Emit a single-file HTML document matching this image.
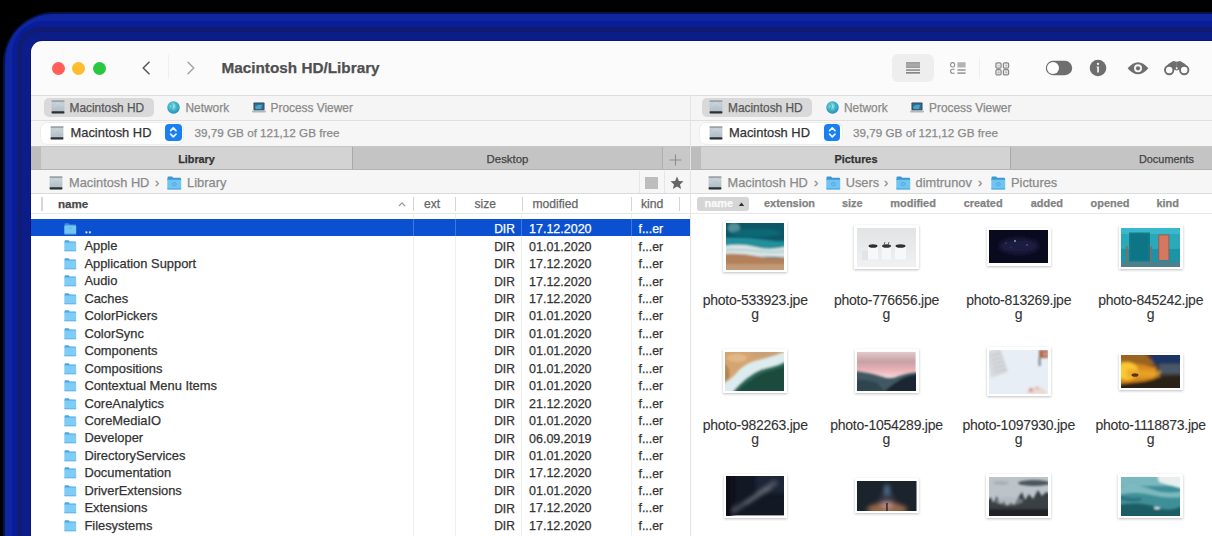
<!DOCTYPE html>
<html><head><meta charset="utf-8"><style>
*{margin:0;padding:0;box-sizing:border-box}
html,body{width:1212px;height:536px;overflow:hidden;background:#000;font-family:"Liberation Sans",sans-serif;position:relative}
.a{position:absolute}
.t{position:absolute;white-space:nowrap;line-height:20px;-webkit-text-stroke:0.25px currentColor}
svg.a{overflow:visible}
</style></head><body>
<div class="a" style="left:2.5px;top:11.5px;width:1400px;height:800px;background:rgba(14,39,160,0.45);border-radius:51px"></div>
<div class="a" style="left:5px;top:14px;width:1400px;height:800px;background:#0e27a0;border-radius:48px"></div>
<div class="a" style="left:12px;top:21px;width:1400px;height:800px;background:#0a1c98;border-radius:32px"></div>
<div class="a" style="left:17px;top:27px;width:1400px;height:800px;background:#0f1c72;border-radius:23px"></div>
<div class="a" style="left:22px;top:32px;width:1400px;height:800px;background:#0c1d8a;border-radius:17px"></div>
<div class="a" style="left:30px;top:40px;width:1400px;height:800px;background:#0a1678;border-radius:12px"></div>
<div class="a" style="left:31px;top:41px;width:1400px;height:800px;background:#fbfbfb;border-radius:11px"></div>
<div class="a" style="left:51.8px;top:61.5px;width:13px;height:13px;border-radius:50%;background:#fe5f57"></div>
<div class="a" style="left:72.3px;top:61.5px;width:13px;height:13px;border-radius:50%;background:#febc2e"></div>
<div class="a" style="left:92.9px;top:61.5px;width:13px;height:13px;border-radius:50%;background:#28c840"></div>
<svg class="a" style="left:141px;top:61px" width="10" height="14" viewBox="0 0 10 14"><path d="M8 1.2 L2.2 7 L8 12.8" stroke="#5a5a5a" stroke-width="1.6" fill="none" stroke-linecap="round" stroke-linejoin="round"/></svg>
<div class="a" style="left:168px;top:55px;width:1px;height:24px;background:#efefef;"></div>
<svg class="a" style="left:186px;top:61px" width="10" height="14" viewBox="0 0 10 14"><path d="M2 1.2 L7.8 7 L2 12.8" stroke="#a6a6a6" stroke-width="1.5" fill="none" stroke-linecap="round" stroke-linejoin="round"/></svg>
<div class="t" style="left:221.5px;top:58.10px;font-size:15.3px;color:#505050;font-weight:700;">Macintosh HD/Library</div>
<div class="a" style="left:892px;top:54px;width:42px;height:28px;background:#eeeeee;border-radius:6px"></div>
<svg class="a" style="left:906px;top:62px" width="14" height="12" viewBox="0 0 14 12"><rect x="0" y="0.2" width="14" height="5.7" fill="#a9a9a9"/><rect x="0" y="0.2" width="14" height="1.2" fill="#9a9a9a"/><rect x="0" y="4.7" width="14" height="1.2" fill="#9a9a9a"/><rect x="0" y="7.3" width="14" height="1.5" fill="#858585"/><rect x="0" y="10.1" width="14" height="1.5" fill="#7a7a7a"/></svg>
<svg class="a" style="left:949.5px;top:62px" width="16" height="12" viewBox="0 0 16 12"><rect x="0.6" y="0.6" width="4" height="4.4" rx="1.8" fill="none" stroke="#8a8a8a" stroke-width="1.1"/><path d="M4.6 7.3 H2.6 Q0.6 7.3 0.6 9.3 Q0.6 11.3 2.6 11.3 H4.6" fill="none" stroke="#8a8a8a" stroke-width="1.1"/><rect x="7.4" y="0.2" width="8.2" height="5.3" fill="#b3b3b3"/><rect x="7.4" y="7.3" width="8.2" height="1.4" fill="#8c8c8c"/><rect x="7.4" y="10.4" width="8.2" height="1.4" fill="#8c8c8c"/></svg>
<div class="a" style="left:979px;top:57px;width:1px;height:22px;background:#efefef;"></div>
<svg class="a" style="left:994.5px;top:61.5px" width="15" height="14" viewBox="0 0 15 14"><g fill="#eaeaea" stroke="#888" stroke-width="1.2"><rect x="0.9" y="0.9" width="5.2" height="5.2" rx="1.2"/><rect x="8.4" y="0.9" width="5.2" height="5.2" rx="1.2"/><rect x="0.9" y="7.7" width="5.2" height="5.2" rx="1.2"/><rect x="8.4" y="7.7" width="5.2" height="5.2" rx="1.2"/></g><path d="M2.2 3.6 H5 M11.2 2.2 V5 M9.8 3.6 H12.6 M2.2 10.4 H5 M3.6 9 V11.8 M9.8 10.4 H12.6 M11.2 9 V11.8" stroke="#bdbdbd" stroke-width="0.8"/></svg>
<svg class="a" style="left:1045px;top:60px" width="28" height="16" viewBox="0 0 28 16"><rect x="0.8" y="0.8" width="26.4" height="14.4" rx="7.2" fill="#6e6e6e"/><circle cx="8" cy="8" r="6" fill="#fff"/></svg>
<svg class="a" style="left:1089px;top:59px" width="18" height="18" viewBox="0 0 18 18"><circle cx="9" cy="9" r="8.3" fill="#6e6e6e"/><circle cx="9" cy="4.9" r="1.15" fill="#f4f4f4"/><path d="M7.6 7.4 H9.9 V13.6 H8.2 V8.5 H7.6Z" fill="#f4f4f4"/></svg>
<svg class="a" style="left:1127px;top:61px" width="22" height="15" viewBox="0 0 22 15"><path d="M0.6 7.3 Q11 -4.8 21.4 7.3 Q11 19.4 0.6 7.3Z" fill="#6e6e6e"/><circle cx="11" cy="7.3" r="4" fill="#f6f6f6"/><circle cx="11" cy="7.3" r="2.1" fill="#6e6e6e"/></svg>
<svg class="a" style="left:1160px;top:55px" width="35" height="25" viewBox="0 0 35 25"><circle cx="9.2" cy="15" r="4.2" fill="none" stroke="#6e6e6e" stroke-width="1.9"/><circle cx="24.2" cy="15" r="4.2" fill="none" stroke="#6e6e6e" stroke-width="1.9"/><path d="M5.3 12.8 Q8 8.2 13.2 6 L16.8 6.8 V15.5 L13.6 14.5 Q12.5 11.2 9.2 10.9 Q6.8 10.9 5.3 12.8Z" fill="#6e6e6e"/><path d="M28.1 12.8 Q25.4 8.2 20.2 6 L16.6 6.8 V15.5 L19.8 14.5 Q20.9 11.2 24.2 10.9 Q26.6 10.9 28.1 12.8Z" fill="#6e6e6e"/><circle cx="16.7" cy="13.2" r="1" fill="#fafafa"/></svg>
<div class="a" style="left:31px;top:95px;width:1200px;height:1px;background:#dedede;"></div>
<div class="a" style="left:31px;top:96px;width:1200px;height:24px;background:#f5f5f5;"></div>
<div class="a" style="left:31px;top:120px;width:1200px;height:1px;background:#e0e0e0;"></div>
<div class="a" style="left:31px;top:121px;width:1200px;height:25px;background:#f6f6f6;"></div>
<div class="a" style="left:31px;top:146px;width:1200px;height:24px;background:#c6c6c6;"></div>
<div class="a" style="left:31px;top:146.5px;width:1200px;height:1.2px;background:#b9b9b9;"></div>
<div class="a" style="left:31px;top:169px;width:1200px;height:1px;background:#b4b4b4;"></div>
<div class="a" style="left:31px;top:170px;width:1200px;height:23px;background:#f6f6f6;"></div>
<div class="a" style="left:31px;top:193px;width:1200px;height:1px;background:#dadada;"></div>
<div class="a" style="left:31px;top:194px;width:1200px;height:342px;background:#ffffff;"></div>
<div class="a" style="left:31px;top:213px;width:1200px;height:1px;background:#e8e8e8;"></div>
<div class="a" style="left:43.5px;top:98px;width:110px;height:19px;background:#d9d9d9;border-radius:5px"></div>
<svg class="a" style="left:50.5px;top:99.8px" width="14" height="14" viewBox="0 0 14 14"><defs><linearGradient id="dg" x1="0" y1="0" x2="0" y2="1"><stop offset="0" stop-color="#c9d3d9"/><stop offset="1" stop-color="#aebbc3"/></linearGradient></defs>
<rect x="0.6" y="0.5" width="12.8" height="12.8" rx="1" fill="url(#dg)"/><rect x="0.6" y="0.5" width="12.8" height="1.1" fill="#80868c"/><path d="M2 7 L7 3 L12 6" stroke="#d8e0e4" stroke-width="0.8" fill="none" opacity="0.6"/><rect x="0.6" y="11.3" width="12.8" height="2.1" rx="0.7" fill="#2c3034"/></svg>
<div class="t" style="left:69.5px;top:97.88px;font-size:11.9px;color:#575757;font-weight:400;">Macintosh HD</div>
<svg class="a" style="left:167px;top:100.5px" width="13" height="13" viewBox="0 0 13 13"><defs><radialGradient id="gg" cx="0.45" cy="0.4" r="0.65"><stop offset="0" stop-color="#a8eef6"/><stop offset="0.55" stop-color="#3fb0d4"/><stop offset="1" stop-color="#2283b8"/></radialGradient></defs>
<circle cx="6.5" cy="6.5" r="6.2" fill="url(#gg)"/><path d="M3.5 3 Q6 4 5 6.5 Q3.5 8 4.8 10 Q6 11 5.8 12.3" stroke="#34b08c" stroke-width="1.3" fill="none" opacity="0.75"/><path d="M8.2 2 Q10 4 9.2 6.2 Q8.4 8 10.2 9" stroke="#38b48e" stroke-width="1.1" fill="none" opacity="0.75"/></svg>
<div class="t" style="left:185.5px;top:97.88px;font-size:11.9px;color:#8a8a8a;font-weight:400;">Network</div>
<svg class="a" style="left:251.5px;top:102px" width="14" height="11" viewBox="0 0 14 11"><rect x="1.5" y="0.5" width="11" height="8" rx="0.8" fill="#34404c"/><rect x="2.4" y="1.4" width="9.2" height="6.3" fill="#2f6e98"/><path d="M3 5 Q6 2 10 3 L9 7 H4Z" fill="#4fb0d8" opacity="0.8"/><rect x="0" y="8.5" width="14" height="1.9" rx="0.8" fill="#b4b8bc"/></svg>
<div class="t" style="left:270.5px;top:97.88px;font-size:11.9px;color:#8a8a8a;font-weight:400;">Process Viewer</div>
<div class="a" style="left:41px;top:123px;width:142px;height:21px;background:#ffffff;border-radius:6px;box-shadow:0 0 0 0.5px #e4e4e4"></div>
<svg class="a" style="left:50px;top:126px" width="14" height="14" viewBox="0 0 14 14"><defs><linearGradient id="dg" x1="0" y1="0" x2="0" y2="1"><stop offset="0" stop-color="#c9d3d9"/><stop offset="1" stop-color="#aebbc3"/></linearGradient></defs>
<rect x="0.6" y="0.5" width="12.8" height="12.8" rx="1" fill="url(#dg)"/><rect x="0.6" y="0.5" width="12.8" height="1.1" fill="#80868c"/><path d="M2 7 L7 3 L12 6" stroke="#d8e0e4" stroke-width="0.8" fill="none" opacity="0.6"/><rect x="0.6" y="11.3" width="12.8" height="2.1" rx="0.7" fill="#2c3034"/></svg>
<div class="t" style="left:70.5px;top:123.13px;font-size:12.9px;color:#333;font-weight:400;">Macintosh HD</div>
<div class="a" style="left:165px;top:124.3px;width:16.6px;height:16.6px;background:#1a80f2;border-radius:4px"></div>
<svg class="a" style="left:165px;top:124.3px" width="17" height="17" viewBox="0 0 17 17"><path d="M5.6 6.6 L8.3 3.9 L11 6.6" stroke="#eaf4ff" stroke-width="1.7" fill="none" stroke-linecap="round" stroke-linejoin="round"/><path d="M5.6 10.2 L8.3 12.9 L11 10.2" stroke="#eaf4ff" stroke-width="1.7" fill="none" stroke-linecap="round" stroke-linejoin="round"/></svg>
<div class="t" style="left:194.5px;top:123.45px;font-size:11.7px;color:#8a8a8a;font-weight:400;">39,79 GB of 121,12 GB free</div>
<div class="a" style="left:31px;top:147px;width:10px;height:22px;background:#bdbdbd;"></div>
<div class="a" style="left:41px;top:147px;width:311px;height:22px;background:#d3d3d3;"></div>
<div class="a" style="left:352px;top:147px;width:1px;height:22px;background:#a9a9a9;"></div>
<div class="a" style="left:353px;top:147px;width:309px;height:22px;background:#c4c4c4;"></div>
<div class="a" style="left:662px;top:147px;width:1px;height:22px;background:#b0b0b0;"></div>
<div class="a" style="left:663px;top:147px;width:26px;height:22px;background:#c8c8c8;"></div>
<div class="t" style="left:146.5px;width:100px;text-align:center;top:148.96px;font-size:10.8px;color:#333;font-weight:700;">Library</div>
<div class="t" style="left:457.5px;width:100px;text-align:center;top:148.75px;font-size:11.4px;color:#444;font-weight:400;">Desktop</div>
<svg class="a" style="left:669px;top:154px" width="13" height="12" viewBox="0 0 13 12"><path d="M6.5 0.5 V11.5 M0.5 6 H12.5" stroke="#8c8c8c" stroke-width="1.1"/></svg>
<svg class="a" style="left:49px;top:176px" width="14" height="14" viewBox="0 0 14 14"><defs><linearGradient id="dg" x1="0" y1="0" x2="0" y2="1"><stop offset="0" stop-color="#c9d3d9"/><stop offset="1" stop-color="#aebbc3"/></linearGradient></defs>
<rect x="0.6" y="0.5" width="12.8" height="12.8" rx="1" fill="url(#dg)"/><rect x="0.6" y="0.5" width="12.8" height="1.1" fill="#80868c"/><path d="M2 7 L7 3 L12 6" stroke="#d8e0e4" stroke-width="0.8" fill="none" opacity="0.6"/><rect x="0.6" y="11.3" width="12.8" height="2.1" rx="0.7" fill="#2c3034"/></svg>
<div class="t" style="left:69px;top:172.76px;font-size:12.8px;color:#8a8a8a;font-weight:400;">Macintosh HD</div>
<div class="t" style="left:155px;top:172.76px;font-size:12.8px;color:#8a8a8a;font-weight:400;">&#8250;</div>
<svg class="a" style="left:167px;top:176.3px" width="15" height="14" viewBox="0 0 15 14"><path d="M0.5 1.4 Q0.5 0.4 1.5 0.4 H5 L6.3 1.8 H13.2 Q14 1.8 14 2.6 V3.6 H0.5Z" fill="#3f94d2"/>
<rect x="0.3" y="3" width="13.9" height="10.4" rx="0.9" fill="#6fc4f2"/><rect x="0.3" y="3" width="13.9" height="1" fill="#4aa2dc"/><rect x="0.3" y="12.5" width="13.9" height="0.9" fill="#4d9fd4"/><rect x="5.6" y="6.6" width="3.4" height="2.8" rx="0.5" fill="none" stroke="#4a9ed8" stroke-width="0.7"/></svg>
<div class="t" style="left:187px;top:172.73px;font-size:12.9px;color:#8a8a8a;font-weight:400;">Library</div>
<div class="a" style="left:639px;top:171px;width:1px;height:22px;background:#e6e6e6;"></div>
<div class="a" style="left:645px;top:176.5px;width:12.5px;height:12px;background:#bdbdbd;"></div>
<div class="a" style="left:664px;top:171px;width:1px;height:22px;background:#e6e6e6;"></div>
<svg class="a" style="left:669.5px;top:175.5px" width="14" height="14" viewBox="0 0 14 14"><path d="M7 0.6 L8.9 4.9 L13.5 5.3 L10 8.4 L11.1 13 L7 10.6 L2.9 13 L4 8.4 L0.5 5.3 L5.1 4.9Z" fill="#666"/></svg>
<div class="a" style="left:41px;top:197px;width:2px;height:14px;background:#d6d6d6;"></div>
<div class="t" style="left:58px;top:193.98px;font-size:11.6px;color:#4a4a4a;font-weight:700;">name</div>
<svg class="a" style="left:398px;top:201px" width="8" height="6" viewBox="0 0 8 6"><path d="M1 5 L4 1.8 L7 5" stroke="#999" stroke-width="1.2" fill="none"/></svg>
<div class="a" style="left:413px;top:197px;width:1.2px;height:14px;background:#d4d4d4;"></div>
<div class="a" style="left:454.7px;top:197px;width:1.2px;height:14px;background:#d4d4d4;"></div>
<div class="a" style="left:521.7px;top:197px;width:1.2px;height:14px;background:#d4d4d4;"></div>
<div class="a" style="left:631px;top:197px;width:1.2px;height:14px;background:#d4d4d4;"></div>
<div class="a" style="left:678.5px;top:197px;width:1.2px;height:14px;background:#d4d4d4;"></div>
<div class="t" style="left:424px;top:193.84px;font-size:12px;color:#666;font-weight:400;">ext</div>
<div class="t" style="left:474.5px;top:193.84px;font-size:12px;color:#666;font-weight:400;">size</div>
<div class="t" style="left:532.5px;top:193.81px;font-size:12.1px;color:#666;font-weight:400;">modified</div>
<div class="t" style="left:641px;top:193.77px;font-size:12.2px;color:#666;font-weight:400;">kind</div>
<div class="a" style="left:412.5px;top:214px;width:1px;height:322px;background:#efefef;"></div>
<div class="a" style="left:454.5px;top:214px;width:1px;height:322px;background:#efefef;"></div>
<div class="a" style="left:520.5px;top:214px;width:1px;height:322px;background:#efefef;"></div>
<div class="a" style="left:631.2px;top:214px;width:1px;height:322px;background:#efefef;"></div>
<div class="a" style="left:689.5px;top:95px;width:1px;height:441px;background:#e4e4e4;"></div>
<div class="a" style="left:31px;top:219.0px;width:658.5px;height:17.3px;background:#0a50d0;"></div>
<div class="a" style="left:412.5px;top:219.0px;width:1px;height:17.3px;background:#3f78de;"></div>
<div class="a" style="left:454.5px;top:219.0px;width:1px;height:17.3px;background:#3f78de;"></div>
<div class="a" style="left:520.5px;top:219.0px;width:1px;height:17.3px;background:#3f78de;"></div>
<div class="a" style="left:631.2px;top:219.0px;width:1px;height:17.3px;background:#3f78de;"></div>
<svg class="a" style="left:64px;top:223.0px" width="13" height="12" viewBox="0 0 13 12"><path d="M0.5 1.2 Q0.5 0.3 1.4 0.3 H4.6 L5.8 1.6 H11.2 Q12 1.6 12 2.4 V3 H0.5Z" fill="#3f8edc"/>
<rect x="0.3" y="2.6" width="11.9" height="8.6" rx="0.9" fill="#74c6f2"/><rect x="0.3" y="10.4" width="11.9" height="0.9" fill="#5aa6e6"/><rect x="4.5" y="4.6" width="3.5" height="1" fill="#4d9ede" opacity="0.6"/></svg>
<div class="t" style="left:84.4px;top:219.03px;font-size:12.9px;color:#fff;font-weight:400;">..</div>
<div class="t" style="left:454.79999999999995px;width:60px;text-align:right;top:219.34px;font-size:12px;color:#fff;font-weight:400;">DIR</div>
<div class="t" style="left:529px;top:219.17px;font-size:12.5px;color:#fff;font-weight:400;">17.12.2020</div>
<div class="t" style="left:638.5px;top:219.24px;font-size:12.3px;color:#fff;font-weight:400;">f...er</div>
<svg class="a" style="left:64px;top:240.45px" width="13" height="12" viewBox="0 0 13 12"><path d="M0.5 1.2 Q0.5 0.3 1.4 0.3 H4.6 L5.8 1.6 H11.2 Q12 1.6 12 2.4 V3 H0.5Z" fill="#4aa6e2"/>
<rect x="0.3" y="2.6" width="11.9" height="8.6" rx="0.9" fill="#7fcdf6"/><rect x="0.3" y="10.2" width="11.9" height="1" fill="#66b6e4"/></svg>
<div class="t" style="left:84.4px;top:236.48px;font-size:12.9px;color:#333;font-weight:400;">Apple</div>
<div class="t" style="left:454.79999999999995px;width:60px;text-align:right;top:236.79px;font-size:12px;color:#333;font-weight:400;">DIR</div>
<div class="t" style="left:529px;top:236.62px;font-size:12.5px;color:#333;font-weight:400;">01.01.2020</div>
<div class="t" style="left:638.5px;top:236.69px;font-size:12.3px;color:#333;font-weight:400;">f...er</div>
<svg class="a" style="left:64px;top:257.9px" width="13" height="12" viewBox="0 0 13 12"><path d="M0.5 1.2 Q0.5 0.3 1.4 0.3 H4.6 L5.8 1.6 H11.2 Q12 1.6 12 2.4 V3 H0.5Z" fill="#4aa6e2"/>
<rect x="0.3" y="2.6" width="11.9" height="8.6" rx="0.9" fill="#7fcdf6"/><rect x="0.3" y="10.2" width="11.9" height="1" fill="#66b6e4"/></svg>
<div class="t" style="left:84.4px;top:253.93px;font-size:12.9px;color:#333;font-weight:400;">Application Support</div>
<div class="t" style="left:454.79999999999995px;width:60px;text-align:right;top:254.24px;font-size:12px;color:#333;font-weight:400;">DIR</div>
<div class="t" style="left:529px;top:254.07px;font-size:12.5px;color:#333;font-weight:400;">17.12.2020</div>
<div class="t" style="left:638.5px;top:254.14px;font-size:12.3px;color:#333;font-weight:400;">f...er</div>
<svg class="a" style="left:64px;top:275.35px" width="13" height="12" viewBox="0 0 13 12"><path d="M0.5 1.2 Q0.5 0.3 1.4 0.3 H4.6 L5.8 1.6 H11.2 Q12 1.6 12 2.4 V3 H0.5Z" fill="#4aa6e2"/>
<rect x="0.3" y="2.6" width="11.9" height="8.6" rx="0.9" fill="#7fcdf6"/><rect x="0.3" y="10.2" width="11.9" height="1" fill="#66b6e4"/></svg>
<div class="t" style="left:84.4px;top:271.38px;font-size:12.9px;color:#333;font-weight:400;">Audio</div>
<div class="t" style="left:454.79999999999995px;width:60px;text-align:right;top:271.69px;font-size:12px;color:#333;font-weight:400;">DIR</div>
<div class="t" style="left:529px;top:271.52px;font-size:12.5px;color:#333;font-weight:400;">17.12.2020</div>
<div class="t" style="left:638.5px;top:271.59px;font-size:12.3px;color:#333;font-weight:400;">f...er</div>
<svg class="a" style="left:64px;top:292.8px" width="13" height="12" viewBox="0 0 13 12"><path d="M0.5 1.2 Q0.5 0.3 1.4 0.3 H4.6 L5.8 1.6 H11.2 Q12 1.6 12 2.4 V3 H0.5Z" fill="#4aa6e2"/>
<rect x="0.3" y="2.6" width="11.9" height="8.6" rx="0.9" fill="#7fcdf6"/><rect x="0.3" y="10.2" width="11.9" height="1" fill="#66b6e4"/></svg>
<div class="t" style="left:84.4px;top:288.83px;font-size:12.9px;color:#333;font-weight:400;">Caches</div>
<div class="t" style="left:454.79999999999995px;width:60px;text-align:right;top:289.14px;font-size:12px;color:#333;font-weight:400;">DIR</div>
<div class="t" style="left:529px;top:288.97px;font-size:12.5px;color:#333;font-weight:400;">17.12.2020</div>
<div class="t" style="left:638.5px;top:289.04px;font-size:12.3px;color:#333;font-weight:400;">f...er</div>
<svg class="a" style="left:64px;top:310.25px" width="13" height="12" viewBox="0 0 13 12"><path d="M0.5 1.2 Q0.5 0.3 1.4 0.3 H4.6 L5.8 1.6 H11.2 Q12 1.6 12 2.4 V3 H0.5Z" fill="#4aa6e2"/>
<rect x="0.3" y="2.6" width="11.9" height="8.6" rx="0.9" fill="#7fcdf6"/><rect x="0.3" y="10.2" width="11.9" height="1" fill="#66b6e4"/></svg>
<div class="t" style="left:84.4px;top:306.28px;font-size:12.9px;color:#333;font-weight:400;">ColorPickers</div>
<div class="t" style="left:454.79999999999995px;width:60px;text-align:right;top:306.59px;font-size:12px;color:#333;font-weight:400;">DIR</div>
<div class="t" style="left:529px;top:306.42px;font-size:12.5px;color:#333;font-weight:400;">01.01.2020</div>
<div class="t" style="left:638.5px;top:306.49px;font-size:12.3px;color:#333;font-weight:400;">f...er</div>
<svg class="a" style="left:64px;top:327.7px" width="13" height="12" viewBox="0 0 13 12"><path d="M0.5 1.2 Q0.5 0.3 1.4 0.3 H4.6 L5.8 1.6 H11.2 Q12 1.6 12 2.4 V3 H0.5Z" fill="#4aa6e2"/>
<rect x="0.3" y="2.6" width="11.9" height="8.6" rx="0.9" fill="#7fcdf6"/><rect x="0.3" y="10.2" width="11.9" height="1" fill="#66b6e4"/></svg>
<div class="t" style="left:84.4px;top:323.73px;font-size:12.9px;color:#333;font-weight:400;">ColorSync</div>
<div class="t" style="left:454.79999999999995px;width:60px;text-align:right;top:324.04px;font-size:12px;color:#333;font-weight:400;">DIR</div>
<div class="t" style="left:529px;top:323.87px;font-size:12.5px;color:#333;font-weight:400;">01.01.2020</div>
<div class="t" style="left:638.5px;top:323.94px;font-size:12.3px;color:#333;font-weight:400;">f...er</div>
<svg class="a" style="left:64px;top:345.15px" width="13" height="12" viewBox="0 0 13 12"><path d="M0.5 1.2 Q0.5 0.3 1.4 0.3 H4.6 L5.8 1.6 H11.2 Q12 1.6 12 2.4 V3 H0.5Z" fill="#4aa6e2"/>
<rect x="0.3" y="2.6" width="11.9" height="8.6" rx="0.9" fill="#7fcdf6"/><rect x="0.3" y="10.2" width="11.9" height="1" fill="#66b6e4"/></svg>
<div class="t" style="left:84.4px;top:341.18px;font-size:12.9px;color:#333;font-weight:400;">Components</div>
<div class="t" style="left:454.79999999999995px;width:60px;text-align:right;top:341.49px;font-size:12px;color:#333;font-weight:400;">DIR</div>
<div class="t" style="left:529px;top:341.32px;font-size:12.5px;color:#333;font-weight:400;">01.01.2020</div>
<div class="t" style="left:638.5px;top:341.39px;font-size:12.3px;color:#333;font-weight:400;">f...er</div>
<svg class="a" style="left:64px;top:362.6px" width="13" height="12" viewBox="0 0 13 12"><path d="M0.5 1.2 Q0.5 0.3 1.4 0.3 H4.6 L5.8 1.6 H11.2 Q12 1.6 12 2.4 V3 H0.5Z" fill="#4aa6e2"/>
<rect x="0.3" y="2.6" width="11.9" height="8.6" rx="0.9" fill="#7fcdf6"/><rect x="0.3" y="10.2" width="11.9" height="1" fill="#66b6e4"/></svg>
<div class="t" style="left:84.4px;top:358.63px;font-size:12.9px;color:#333;font-weight:400;">Compositions</div>
<div class="t" style="left:454.79999999999995px;width:60px;text-align:right;top:358.94px;font-size:12px;color:#333;font-weight:400;">DIR</div>
<div class="t" style="left:529px;top:358.77px;font-size:12.5px;color:#333;font-weight:400;">01.01.2020</div>
<div class="t" style="left:638.5px;top:358.84px;font-size:12.3px;color:#333;font-weight:400;">f...er</div>
<svg class="a" style="left:64px;top:380.04999999999995px" width="13" height="12" viewBox="0 0 13 12"><path d="M0.5 1.2 Q0.5 0.3 1.4 0.3 H4.6 L5.8 1.6 H11.2 Q12 1.6 12 2.4 V3 H0.5Z" fill="#4aa6e2"/>
<rect x="0.3" y="2.6" width="11.9" height="8.6" rx="0.9" fill="#7fcdf6"/><rect x="0.3" y="10.2" width="11.9" height="1" fill="#66b6e4"/></svg>
<div class="t" style="left:84.4px;top:376.08px;font-size:12.9px;color:#333;font-weight:400;">Contextual Menu Items</div>
<div class="t" style="left:454.79999999999995px;width:60px;text-align:right;top:376.39px;font-size:12px;color:#333;font-weight:400;">DIR</div>
<div class="t" style="left:529px;top:376.22px;font-size:12.5px;color:#333;font-weight:400;">01.01.2020</div>
<div class="t" style="left:638.5px;top:376.29px;font-size:12.3px;color:#333;font-weight:400;">f...er</div>
<svg class="a" style="left:64px;top:397.5px" width="13" height="12" viewBox="0 0 13 12"><path d="M0.5 1.2 Q0.5 0.3 1.4 0.3 H4.6 L5.8 1.6 H11.2 Q12 1.6 12 2.4 V3 H0.5Z" fill="#4aa6e2"/>
<rect x="0.3" y="2.6" width="11.9" height="8.6" rx="0.9" fill="#7fcdf6"/><rect x="0.3" y="10.2" width="11.9" height="1" fill="#66b6e4"/></svg>
<div class="t" style="left:84.4px;top:393.53px;font-size:12.9px;color:#333;font-weight:400;">CoreAnalytics</div>
<div class="t" style="left:454.79999999999995px;width:60px;text-align:right;top:393.84px;font-size:12px;color:#333;font-weight:400;">DIR</div>
<div class="t" style="left:529px;top:393.67px;font-size:12.5px;color:#333;font-weight:400;">21.12.2020</div>
<div class="t" style="left:638.5px;top:393.74px;font-size:12.3px;color:#333;font-weight:400;">f...er</div>
<svg class="a" style="left:64px;top:414.95px" width="13" height="12" viewBox="0 0 13 12"><path d="M0.5 1.2 Q0.5 0.3 1.4 0.3 H4.6 L5.8 1.6 H11.2 Q12 1.6 12 2.4 V3 H0.5Z" fill="#4aa6e2"/>
<rect x="0.3" y="2.6" width="11.9" height="8.6" rx="0.9" fill="#7fcdf6"/><rect x="0.3" y="10.2" width="11.9" height="1" fill="#66b6e4"/></svg>
<div class="t" style="left:84.4px;top:410.98px;font-size:12.9px;color:#333;font-weight:400;">CoreMediaIO</div>
<div class="t" style="left:454.79999999999995px;width:60px;text-align:right;top:411.29px;font-size:12px;color:#333;font-weight:400;">DIR</div>
<div class="t" style="left:529px;top:411.12px;font-size:12.5px;color:#333;font-weight:400;">01.01.2020</div>
<div class="t" style="left:638.5px;top:411.19px;font-size:12.3px;color:#333;font-weight:400;">f...er</div>
<svg class="a" style="left:64px;top:432.4px" width="13" height="12" viewBox="0 0 13 12"><path d="M0.5 1.2 Q0.5 0.3 1.4 0.3 H4.6 L5.8 1.6 H11.2 Q12 1.6 12 2.4 V3 H0.5Z" fill="#4aa6e2"/>
<rect x="0.3" y="2.6" width="11.9" height="8.6" rx="0.9" fill="#7fcdf6"/><rect x="0.3" y="10.2" width="11.9" height="1" fill="#66b6e4"/></svg>
<div class="t" style="left:84.4px;top:428.43px;font-size:12.9px;color:#333;font-weight:400;">Developer</div>
<div class="t" style="left:454.79999999999995px;width:60px;text-align:right;top:428.74px;font-size:12px;color:#333;font-weight:400;">DIR</div>
<div class="t" style="left:529px;top:428.57px;font-size:12.5px;color:#333;font-weight:400;">06.09.2019</div>
<div class="t" style="left:638.5px;top:428.64px;font-size:12.3px;color:#333;font-weight:400;">f...er</div>
<svg class="a" style="left:64px;top:449.85px" width="13" height="12" viewBox="0 0 13 12"><path d="M0.5 1.2 Q0.5 0.3 1.4 0.3 H4.6 L5.8 1.6 H11.2 Q12 1.6 12 2.4 V3 H0.5Z" fill="#4aa6e2"/>
<rect x="0.3" y="2.6" width="11.9" height="8.6" rx="0.9" fill="#7fcdf6"/><rect x="0.3" y="10.2" width="11.9" height="1" fill="#66b6e4"/></svg>
<div class="t" style="left:84.4px;top:445.88px;font-size:12.9px;color:#333;font-weight:400;">DirectoryServices</div>
<div class="t" style="left:454.79999999999995px;width:60px;text-align:right;top:446.19px;font-size:12px;color:#333;font-weight:400;">DIR</div>
<div class="t" style="left:529px;top:446.02px;font-size:12.5px;color:#333;font-weight:400;">01.01.2020</div>
<div class="t" style="left:638.5px;top:446.09px;font-size:12.3px;color:#333;font-weight:400;">f...er</div>
<svg class="a" style="left:64px;top:467.29999999999995px" width="13" height="12" viewBox="0 0 13 12"><path d="M0.5 1.2 Q0.5 0.3 1.4 0.3 H4.6 L5.8 1.6 H11.2 Q12 1.6 12 2.4 V3 H0.5Z" fill="#4aa6e2"/>
<rect x="0.3" y="2.6" width="11.9" height="8.6" rx="0.9" fill="#7fcdf6"/><rect x="0.3" y="10.2" width="11.9" height="1" fill="#66b6e4"/></svg>
<div class="t" style="left:84.4px;top:463.33px;font-size:12.9px;color:#333;font-weight:400;">Documentation</div>
<div class="t" style="left:454.79999999999995px;width:60px;text-align:right;top:463.64px;font-size:12px;color:#333;font-weight:400;">DIR</div>
<div class="t" style="left:529px;top:463.47px;font-size:12.5px;color:#333;font-weight:400;">17.12.2020</div>
<div class="t" style="left:638.5px;top:463.54px;font-size:12.3px;color:#333;font-weight:400;">f...er</div>
<svg class="a" style="left:64px;top:484.75px" width="13" height="12" viewBox="0 0 13 12"><path d="M0.5 1.2 Q0.5 0.3 1.4 0.3 H4.6 L5.8 1.6 H11.2 Q12 1.6 12 2.4 V3 H0.5Z" fill="#4aa6e2"/>
<rect x="0.3" y="2.6" width="11.9" height="8.6" rx="0.9" fill="#7fcdf6"/><rect x="0.3" y="10.2" width="11.9" height="1" fill="#66b6e4"/></svg>
<div class="t" style="left:84.4px;top:480.78px;font-size:12.9px;color:#333;font-weight:400;">DriverExtensions</div>
<div class="t" style="left:454.79999999999995px;width:60px;text-align:right;top:481.09px;font-size:12px;color:#333;font-weight:400;">DIR</div>
<div class="t" style="left:529px;top:480.92px;font-size:12.5px;color:#333;font-weight:400;">01.01.2020</div>
<div class="t" style="left:638.5px;top:480.99px;font-size:12.3px;color:#333;font-weight:400;">f...er</div>
<svg class="a" style="left:64px;top:502.2px" width="13" height="12" viewBox="0 0 13 12"><path d="M0.5 1.2 Q0.5 0.3 1.4 0.3 H4.6 L5.8 1.6 H11.2 Q12 1.6 12 2.4 V3 H0.5Z" fill="#4aa6e2"/>
<rect x="0.3" y="2.6" width="11.9" height="8.6" rx="0.9" fill="#7fcdf6"/><rect x="0.3" y="10.2" width="11.9" height="1" fill="#66b6e4"/></svg>
<div class="t" style="left:84.4px;top:498.23px;font-size:12.9px;color:#333;font-weight:400;">Extensions</div>
<div class="t" style="left:454.79999999999995px;width:60px;text-align:right;top:498.54px;font-size:12px;color:#333;font-weight:400;">DIR</div>
<div class="t" style="left:529px;top:498.37px;font-size:12.5px;color:#333;font-weight:400;">17.12.2020</div>
<div class="t" style="left:638.5px;top:498.44px;font-size:12.3px;color:#333;font-weight:400;">f...er</div>
<svg class="a" style="left:64px;top:519.65px" width="13" height="12" viewBox="0 0 13 12"><path d="M0.5 1.2 Q0.5 0.3 1.4 0.3 H4.6 L5.8 1.6 H11.2 Q12 1.6 12 2.4 V3 H0.5Z" fill="#4aa6e2"/>
<rect x="0.3" y="2.6" width="11.9" height="8.6" rx="0.9" fill="#7fcdf6"/><rect x="0.3" y="10.2" width="11.9" height="1" fill="#66b6e4"/></svg>
<div class="t" style="left:84.4px;top:515.68px;font-size:12.9px;color:#333;font-weight:400;">Filesystems</div>
<div class="t" style="left:454.79999999999995px;width:60px;text-align:right;top:515.99px;font-size:12px;color:#333;font-weight:400;">DIR</div>
<div class="t" style="left:529px;top:515.82px;font-size:12.5px;color:#333;font-weight:400;">17.12.2020</div>
<div class="t" style="left:638.5px;top:515.89px;font-size:12.3px;color:#333;font-weight:400;">f...er</div>
<div class="a" style="left:702.0px;top:98px;width:110px;height:19px;background:#d9d9d9;border-radius:5px"></div>
<svg class="a" style="left:709.0px;top:99.8px" width="14" height="14" viewBox="0 0 14 14"><defs><linearGradient id="dg" x1="0" y1="0" x2="0" y2="1"><stop offset="0" stop-color="#c9d3d9"/><stop offset="1" stop-color="#aebbc3"/></linearGradient></defs>
<rect x="0.6" y="0.5" width="12.8" height="12.8" rx="1" fill="url(#dg)"/><rect x="0.6" y="0.5" width="12.8" height="1.1" fill="#80868c"/><path d="M2 7 L7 3 L12 6" stroke="#d8e0e4" stroke-width="0.8" fill="none" opacity="0.6"/><rect x="0.6" y="11.3" width="12.8" height="2.1" rx="0.7" fill="#2c3034"/></svg>
<div class="t" style="left:728.0px;top:97.88px;font-size:11.9px;color:#575757;font-weight:400;">Macintosh HD</div>
<svg class="a" style="left:825.5px;top:100.5px" width="13" height="13" viewBox="0 0 13 13"><defs><radialGradient id="gg" cx="0.45" cy="0.4" r="0.65"><stop offset="0" stop-color="#a8eef6"/><stop offset="0.55" stop-color="#3fb0d4"/><stop offset="1" stop-color="#2283b8"/></radialGradient></defs>
<circle cx="6.5" cy="6.5" r="6.2" fill="url(#gg)"/><path d="M3.5 3 Q6 4 5 6.5 Q3.5 8 4.8 10 Q6 11 5.8 12.3" stroke="#34b08c" stroke-width="1.3" fill="none" opacity="0.75"/><path d="M8.2 2 Q10 4 9.2 6.2 Q8.4 8 10.2 9" stroke="#38b48e" stroke-width="1.1" fill="none" opacity="0.75"/></svg>
<div class="t" style="left:844.0px;top:97.88px;font-size:11.9px;color:#8a8a8a;font-weight:400;">Network</div>
<svg class="a" style="left:910.0px;top:102px" width="14" height="11" viewBox="0 0 14 11"><rect x="1.5" y="0.5" width="11" height="8" rx="0.8" fill="#34404c"/><rect x="2.4" y="1.4" width="9.2" height="6.3" fill="#2f6e98"/><path d="M3 5 Q6 2 10 3 L9 7 H4Z" fill="#4fb0d8" opacity="0.8"/><rect x="0" y="8.5" width="14" height="1.9" rx="0.8" fill="#b4b8bc"/></svg>
<div class="t" style="left:929.0px;top:97.88px;font-size:11.9px;color:#8a8a8a;font-weight:400;">Process Viewer</div>
<div class="a" style="left:699.5px;top:123px;width:142px;height:21px;background:#ffffff;border-radius:6px;box-shadow:0 0 0 0.5px #e4e4e4"></div>
<svg class="a" style="left:708.5px;top:126px" width="14" height="14" viewBox="0 0 14 14"><defs><linearGradient id="dg" x1="0" y1="0" x2="0" y2="1"><stop offset="0" stop-color="#c9d3d9"/><stop offset="1" stop-color="#aebbc3"/></linearGradient></defs>
<rect x="0.6" y="0.5" width="12.8" height="12.8" rx="1" fill="url(#dg)"/><rect x="0.6" y="0.5" width="12.8" height="1.1" fill="#80868c"/><path d="M2 7 L7 3 L12 6" stroke="#d8e0e4" stroke-width="0.8" fill="none" opacity="0.6"/><rect x="0.6" y="11.3" width="12.8" height="2.1" rx="0.7" fill="#2c3034"/></svg>
<div class="t" style="left:729.0px;top:123.13px;font-size:12.9px;color:#333;font-weight:400;">Macintosh HD</div>
<div class="a" style="left:823.5px;top:124.3px;width:16.6px;height:16.6px;background:#1a80f2;border-radius:4px"></div>
<svg class="a" style="left:823.5px;top:124.3px" width="17" height="17" viewBox="0 0 17 17"><path d="M5.6 6.6 L8.3 3.9 L11 6.6" stroke="#eaf4ff" stroke-width="1.7" fill="none" stroke-linecap="round" stroke-linejoin="round"/><path d="M5.6 10.2 L8.3 12.9 L11 10.2" stroke="#eaf4ff" stroke-width="1.7" fill="none" stroke-linecap="round" stroke-linejoin="round"/></svg>
<div class="t" style="left:853.0px;top:123.45px;font-size:11.7px;color:#8a8a8a;font-weight:400;">39,79 GB of 121,12 GB free</div>
<div class="a" style="left:691px;top:147px;width:10px;height:22px;background:#bdbdbd;"></div>
<div class="a" style="left:701px;top:147px;width:309px;height:22px;background:#d3d3d3;"></div>
<div class="a" style="left:1010px;top:147px;width:1px;height:22px;background:#a9a9a9;"></div>
<div class="a" style="left:1011px;top:147px;width:201px;height:22px;background:#c4c4c4;"></div>
<div class="t" style="left:806.0px;width:100px;text-align:center;top:148.92px;font-size:10.9px;color:#333;font-weight:700;">Pictures</div>
<div class="t" style="left:1116.5px;width:100px;text-align:center;top:148.92px;font-size:10.9px;color:#444;font-weight:400;">Documents</div>
<svg class="a" style="left:708px;top:176px" width="14" height="14" viewBox="0 0 14 14"><defs><linearGradient id="dg" x1="0" y1="0" x2="0" y2="1"><stop offset="0" stop-color="#c9d3d9"/><stop offset="1" stop-color="#aebbc3"/></linearGradient></defs>
<rect x="0.6" y="0.5" width="12.8" height="12.8" rx="1" fill="url(#dg)"/><rect x="0.6" y="0.5" width="12.8" height="1.1" fill="#80868c"/><path d="M2 7 L7 3 L12 6" stroke="#d8e0e4" stroke-width="0.8" fill="none" opacity="0.6"/><rect x="0.6" y="11.3" width="12.8" height="2.1" rx="0.7" fill="#2c3034"/></svg>
<div class="t" style="left:727.5px;top:172.76px;font-size:12.8px;color:#8a8a8a;font-weight:400;">Macintosh HD</div>
<div class="t" style="left:814px;top:172.76px;font-size:12.8px;color:#8a8a8a;font-weight:400;">&#8250;</div>
<svg class="a" style="left:826px;top:176.3px" width="15" height="14" viewBox="0 0 15 14"><path d="M0.5 1.4 Q0.5 0.4 1.5 0.4 H5 L6.3 1.8 H13.2 Q14 1.8 14 2.6 V3.6 H0.5Z" fill="#3f94d2"/>
<rect x="0.3" y="3" width="13.9" height="10.4" rx="0.9" fill="#6fc4f2"/><rect x="0.3" y="3" width="13.9" height="1" fill="#4aa2dc"/><rect x="0.3" y="12.5" width="13.9" height="0.9" fill="#4d9fd4"/><rect x="5.6" y="6.6" width="3.4" height="2.8" rx="0.5" fill="none" stroke="#4a9ed8" stroke-width="0.7"/></svg>
<div class="t" style="left:845.7px;top:172.76px;font-size:12.8px;color:#8a8a8a;font-weight:400;">Users</div>
<div class="t" style="left:884px;top:172.76px;font-size:12.8px;color:#8a8a8a;font-weight:400;">&#8250;</div>
<svg class="a" style="left:896px;top:176.3px" width="15" height="14" viewBox="0 0 15 14"><path d="M0.5 1.4 Q0.5 0.4 1.5 0.4 H5 L6.3 1.8 H13.2 Q14 1.8 14 2.6 V3.6 H0.5Z" fill="#3f94d2"/>
<rect x="0.3" y="3" width="13.9" height="10.4" rx="0.9" fill="#6fc4f2"/><rect x="0.3" y="3" width="13.9" height="1" fill="#4aa2dc"/><rect x="0.3" y="12.5" width="13.9" height="0.9" fill="#4d9fd4"/><rect x="5.6" y="6.6" width="3.4" height="2.8" rx="0.5" fill="none" stroke="#4a9ed8" stroke-width="0.7"/></svg>
<div class="t" style="left:915.6px;top:172.76px;font-size:12.8px;color:#8a8a8a;font-weight:400;">dimtrunov</div>
<div class="t" style="left:978px;top:172.76px;font-size:12.8px;color:#8a8a8a;font-weight:400;">&#8250;</div>
<svg class="a" style="left:991px;top:176.3px" width="15" height="14" viewBox="0 0 15 14"><path d="M0.5 1.4 Q0.5 0.4 1.5 0.4 H5 L6.3 1.8 H13.2 Q14 1.8 14 2.6 V3.6 H0.5Z" fill="#3f94d2"/>
<rect x="0.3" y="3" width="13.9" height="10.4" rx="0.9" fill="#6fc4f2"/><rect x="0.3" y="3" width="13.9" height="1" fill="#4aa2dc"/><rect x="0.3" y="12.5" width="13.9" height="0.9" fill="#4d9fd4"/><rect x="5.6" y="6.6" width="3.4" height="2.8" rx="0.5" fill="none" stroke="#4a9ed8" stroke-width="0.7"/></svg>
<div class="t" style="left:1011px;top:172.76px;font-size:12.8px;color:#8a8a8a;font-weight:400;">Pictures</div>
<div class="a" style="left:696.5px;top:197px;width:52.5px;height:13.5px;background:#d5d5d5;border-radius:3px"></div>
<div class="t" style="left:704.5px;top:193.02px;font-size:10.9px;color:#fbfbfb;font-weight:700;">name</div>
<svg class="a" style="left:738px;top:201px" width="7" height="6" viewBox="0 0 7 6"><path d="M0.8 5 L3.5 1.5 L6.2 5Z" fill="#333"/></svg>
<div class="t" style="left:764px;top:193.01px;font-size:10.95px;color:#828282;font-weight:700;">extension</div>
<div class="t" style="left:842px;top:193.01px;font-size:10.95px;color:#828282;font-weight:700;">size</div>
<div class="t" style="left:890.3px;top:193.01px;font-size:10.95px;color:#828282;font-weight:700;">modified</div>
<div class="t" style="left:963.7px;top:193.01px;font-size:10.95px;color:#828282;font-weight:700;">created</div>
<div class="t" style="left:1030.7px;top:193.01px;font-size:10.95px;color:#828282;font-weight:700;">added</div>
<div class="t" style="left:1090.6px;top:193.01px;font-size:10.95px;color:#828282;font-weight:700;">opened</div>
<div class="t" style="left:1156.5px;top:193.01px;font-size:10.95px;color:#828282;font-weight:700;">kind</div>
<div class="a" style="left:723.4px;top:221.0px;width:63.6px;height:51.4px;background:#fff;box-shadow:0 1px 2.5px rgba(0,0,0,0.25)"></div>
<svg class="a" style="left:726.0px;top:223.4px;overflow:hidden" width="58.4" height="46.6" viewBox="0 0 58.4 46.6" preserveAspectRatio="none"><filter id="f1" x="-20%" y="-20%" width="140%" height="140%"><feGaussianBlur stdDeviation="1.2"/></filter><rect width="100%" height="100%" fill="#0c5b6b"/><g filter="url(#f1)">
<rect x="-3" y="-3" width="65" height="20" fill="#0b5767"/><ellipse cx="8" cy="5" rx="6" ry="5" fill="#5f9ea8" opacity="0.8"/><ellipse cx="30" cy="10" rx="25" ry="4" fill="#136e7c" opacity="0.7"/>
<path d="M-3 15 Q20 14 40 17 T62 16 V26 H-3Z" fill="#21909b"/>
<path d="M-3 23 Q15 20 30 24 T62 23 V35 Q45 33 30 34 T-3 31Z" fill="#d9e5e6"/>
<path d="M-3 27 Q15 26 30 28 T62 28" stroke="#a9c8cc" stroke-width="1.5" fill="none"/>
<path d="M-3 31 Q15 30 30 33 T62 34 V50 H-3Z" fill="#b2805a"/><rect x="-3" y="41" width="65" height="9" fill="#c29a78"/></g></svg>
<div class="a" style="left:854.4px;top:225.3px;width:64.2px;height:43.8px;background:#fff;box-shadow:0 1px 2.5px rgba(0,0,0,0.25)"></div>
<svg class="a" style="left:857.0px;top:227.7px;overflow:hidden" width="59.0" height="39.0" viewBox="0 0 59.0 39.0" preserveAspectRatio="none"><filter id="f2" x="-20%" y="-20%" width="140%" height="140%"><feGaussianBlur stdDeviation="0.5"/></filter><defs><linearGradient id="c1" x1="0" y1="0" x2="0" y2="1"><stop offset="0" stop-color="#e2e3e5"/><stop offset="0.6" stop-color="#eaebed"/><stop offset="1" stop-color="#f0f1f3"/></linearGradient></defs><rect width="100%" height="100%" fill="url(#c1)"/><g filter="url(#f2)">
<rect x="11" y="18.5" width="10" height="13" fill="#f6f8fa"/><rect x="25" y="18.5" width="9" height="13" fill="#f5f7f9"/><rect x="38" y="18.5" width="11" height="13" fill="#f6f8fa"/>
<ellipse cx="16" cy="18" rx="4.5" ry="1.8" fill="#2e2e2e"/><ellipse cx="29.5" cy="18" rx="4.5" ry="1.8" fill="#353535"/><ellipse cx="43.5" cy="18" rx="5" ry="1.8" fill="#2e2e2e"/><path d="M27 17 L28 14 M31 17 L32 14" stroke="#444" stroke-width="0.8"/><rect x="5" y="23" width="6" height="9" fill="#d8dee4" opacity="0.6"/></g></svg>
<div class="a" style="left:986.6px;top:227.5px;width:64.2px;height:38.4px;background:#fff;box-shadow:0 1px 2.5px rgba(0,0,0,0.25)"></div>
<svg class="a" style="left:989.2px;top:229.9px;overflow:hidden" width="59.0" height="33.6" viewBox="0 0 59.0 33.6" preserveAspectRatio="none"><filter id="f3" x="-20%" y="-20%" width="140%" height="140%"><feGaussianBlur stdDeviation="2"/></filter><rect width="100%" height="100%" fill="#0a0a1f"/><g filter="url(#f3)"><ellipse cx="30" cy="16" rx="20" ry="8" fill="#1c1c44" opacity="0.9"/></g><circle cx="26" cy="11" r="0.9" fill="#9ab"/><circle cx="17" cy="13" r="0.6" fill="#678"/><circle cx="38" cy="15" r="0.7" fill="#889"/><circle cx="22" cy="17" r="0.5" fill="#567"/></svg>
<div class="a" style="left:1118.6px;top:225.1px;width:64.2px;height:44.0px;background:#fff;box-shadow:0 1px 2.5px rgba(0,0,0,0.25)"></div>
<svg class="a" style="left:1121.2px;top:227.5px;overflow:hidden" width="59.0" height="39.2" viewBox="0 0 59.0 39.2" preserveAspectRatio="none"><filter id="f4" x="-20%" y="-20%" width="140%" height="140%"><feGaussianBlur stdDeviation="0.5"/></filter><rect width="100%" height="100%" fill="#2aa9bb"/><g filter="url(#f4)"><rect y="-2" width="62" height="8" fill="#38b8ca"/><rect y="21" width="62" height="13" fill="#1e93a6"/>
<rect x="8" y="4.5" width="21" height="29" fill="#157a8a"/><rect x="9.5" y="6" width="18" height="26" fill="#117585"/><rect x="37.3" y="6.5" width="11" height="26" fill="#9a5a4a"/><rect x="38.2" y="7.4" width="9.2" height="24.6" fill="#d6775e"/>
<rect x="5" y="18" width="1.6" height="16" fill="#8a6a5a"/><rect x="29.5" y="18" width="1.6" height="16" fill="#8a6a5a"/><rect y="34" width="62" height="8" fill="#4f7f8a"/></g></svg>
<div class="a" style="left:722.8px;top:349.3px;width:64.2px;height:43.7px;background:#fff;box-shadow:0 1px 2.5px rgba(0,0,0,0.25)"></div>
<svg class="a" style="left:725.4px;top:351.7px;overflow:hidden" width="59.0" height="38.9" viewBox="0 0 59.0 38.9" preserveAspectRatio="none"><filter id="f5" x="-20%" y="-20%" width="140%" height="140%"><feGaussianBlur stdDeviation="0.9"/></filter><rect width="100%" height="100%" fill="#d4a572"/><g filter="url(#f5)"><ellipse cx="12" cy="6" rx="10" ry="4" fill="#e2b888"/><path d="M0 12 Q6 16 4 26 L0 30Z" fill="#b38250"/><ellipse cx="40" cy="2" rx="14" ry="3" fill="#c8a078"/>
<path d="M-2 42 V32 Q8 26 14 18 Q24 9 38 7 Q50 4 62 -1 V42Z" fill="#dcebee"/><path d="M6 42 Q14 32 22 26 Q34 17 46 15 Q54 13 62 9 V42Z" fill="#2a6a5a"/><path d="M10 42 Q18 33 26 28 Q36 20 48 18 Q55 16 62 13 V42Z" fill="#1f4c3c"/></g></svg>
<div class="a" style="left:854.8px;top:349.3px;width:63.8px;height:43.7px;background:#fff;box-shadow:0 1px 2.5px rgba(0,0,0,0.25)"></div>
<svg class="a" style="left:857.4px;top:351.7px;overflow:hidden" width="58.6" height="38.9" viewBox="0 0 58.6 38.9" preserveAspectRatio="none"><filter id="f6" x="-20%" y="-20%" width="140%" height="140%"><feGaussianBlur stdDeviation="0.9"/></filter><defs><linearGradient id="p1" x1="0" y1="0" x2="0" y2="1"><stop offset="0" stop-color="#e4c8cc"/><stop offset="0.25" stop-color="#c6a2a4"/><stop offset="0.45" stop-color="#eab0b6"/><stop offset="0.65" stop-color="#f4d4d6"/></linearGradient></defs><rect width="100%" height="100%" fill="url(#p1)"/><g filter="url(#f6)">
<path d="M-2 19 Q15 21 26 25 Q34 28 42 24 Q50 21 62 20 V42 H-2Z" fill="#3f5963"/><path d="M-2 28 Q10 27 20 31 L30 42 H-2Z" fill="#2f4550"/><path d="M24 42 Q38 30 46 26 Q52 23 62 22 V42Z" fill="#1b2832"/></g></svg>
<div class="a" style="left:986.6px;top:347.1px;width:64.2px;height:49.2px;background:#fff;box-shadow:0 1px 2.5px rgba(0,0,0,0.25)"></div>
<svg class="a" style="left:989.2px;top:349.5px;overflow:hidden" width="59.0" height="44.4" viewBox="0 0 59.0 44.4" preserveAspectRatio="none"><filter id="f7" x="-20%" y="-20%" width="140%" height="140%"><feGaussianBlur stdDeviation="0.8"/></filter><rect width="100%" height="100%" fill="#e8eef5"/><g filter="url(#f7)"><path d="M-2 2 L11 -2 L19 22 L2 28 Z" fill="#d6dade"/><path d="M2 6 L12 3 M3 10 L14 7 M4 14 L15.5 11 M5 18 L17 15 M6 22 L18 19" stroke="#bfc3c7" stroke-width="1.1"/>
<rect x="50" y="0" width="9" height="8" fill="#a87050"/><circle cx="56" cy="4" r="2.2" fill="#e08a8a"/><rect x="49.5" y="8" width="2.2" height="8" fill="#7a8898"/><path d="M36 44 Q42 36 50 37 Q56 38 58 44Z" fill="#eadad6"/><circle cx="42" cy="40" r="2.3" fill="#d8a0a0"/><circle cx="48" cy="38" r="1.8" fill="#e6b8b0"/></g></svg>
<div class="a" style="left:1118.6px;top:352.5px;width:64.2px;height:37.8px;background:#fff;box-shadow:0 1px 2.5px rgba(0,0,0,0.25)"></div>
<svg class="a" style="left:1121.2px;top:354.9px;overflow:hidden" width="59.0" height="33.0" viewBox="0 0 59.0 33.0" preserveAspectRatio="none"><filter id="f8" x="-20%" y="-20%" width="140%" height="140%"><feGaussianBlur stdDeviation="1.4"/></filter><rect width="100%" height="100%" fill="#3c3028"/><g filter="url(#f8)"><rect x="30" y="-3" width="32" height="13" fill="#1d3462"/><rect x="38" y="9" width="24" height="10" fill="#485868"/>
<path d="M-3 -3 H24 L34 10 L-3 12Z" fill="#9a6424"/><path d="M-3 6 L36 12 L34 24 L-3 32Z" fill="#d88a1e"/><ellipse cx="6" cy="16" rx="11" ry="9" fill="#fac832"/><path d="M6 14 L40 16 L38 22 L6 22Z" fill="#eaa62a" opacity="0.8"/><path d="M-3 29 L24 26 L40 22 L62 20 V36 H-3Z" fill="#2c2018"/></g><ellipse cx="14" cy="20" rx="3.5" ry="1.8" fill="#5a3410"/></svg>
<div class="a" style="left:723.8px;top:473.9px;width:63.3px;height:44.2px;background:#fff;box-shadow:0 1px 2.5px rgba(0,0,0,0.25)"></div>
<svg class="a" style="left:726.4px;top:476.3px;overflow:hidden" width="58.1" height="39.4" viewBox="0 0 58.1 39.4" preserveAspectRatio="none"><filter id="f9" x="-20%" y="-20%" width="140%" height="140%"><feGaussianBlur stdDeviation="2.2"/></filter><rect width="100%" height="100%" fill="#121824"/><g filter="url(#f9)"><rect x="30" y="-3" width="31" height="20" fill="#1b2538"/><path d="M6 36 L50 6" stroke="#6a6e78" stroke-width="4" opacity="0.7"/><path d="M20 28 L44 12" stroke="#9a9ca2" stroke-width="2" opacity="0.6"/><rect x="-3" y="-3" width="10" height="46" fill="#0e1118"/></g></svg>
<div class="a" style="left:854.6px;top:478.1px;width:64.7px;height:35.3px;background:#fff;box-shadow:0 1px 2.5px rgba(0,0,0,0.25)"></div>
<svg class="a" style="left:857.2px;top:480.5px;overflow:hidden" width="59.5" height="30.5" viewBox="0 0 59.5 30.5" preserveAspectRatio="none"><filter id="f10" x="-20%" y="-20%" width="140%" height="140%"><feGaussianBlur stdDeviation="2"/></filter><rect width="100%" height="100%" fill="#1b232c"/><g filter="url(#f10)"><path d="M30 4 L14 31 H46Z" fill="#3a3a48" opacity="0.8"/><ellipse cx="30" cy="28" rx="20" ry="6" fill="#a87048" opacity="0.85"/><ellipse cx="30" cy="24" rx="6" ry="4" fill="#d0a0a8" opacity="0.6"/><ellipse cx="30" cy="9" rx="3" ry="6" fill="#5a84a8" opacity="0.7"/></g><rect x="29.3" y="22" width="1.3" height="8" fill="#1a1a1a"/></svg>
<div class="a" style="left:986.4px;top:474.2px;width:64.6px;height:44.2px;background:#fff;box-shadow:0 1px 2.5px rgba(0,0,0,0.25)"></div>
<svg class="a" style="left:989.0px;top:476.6px;overflow:hidden" width="59.4" height="39.4" viewBox="0 0 59.4 39.4" preserveAspectRatio="none"><filter id="f11" x="-20%" y="-20%" width="140%" height="140%"><feGaussianBlur stdDeviation="1"/></filter><rect width="100%" height="100%" fill="#bcc4ca"/><g filter="url(#f11)"><ellipse cx="45" cy="6" rx="16" ry="3" fill="#4c545a"/><ellipse cx="12" cy="6" rx="8" ry="2" fill="#a8b0b6"/>
<path d="M-2 42 V24 L2 20 L4 26 L8 19 L11 27 L15 24 L18 29 L22 25 L25 28 L29 21 L33 15 L36 23 L40 17 L44 22 L49 13 L53 19 L57 15 L62 17 V42Z" fill="#3a4044"/><rect x="-2" y="32" width="64" height="10" fill="#202326"/><ellipse cx="20" cy="24" rx="14" ry="4" fill="#aab2b8" opacity="0.5"/></g></svg>
<div class="a" style="left:1118.4px;top:474.2px;width:64.2px;height:44.2px;background:#fff;box-shadow:0 1px 2.5px rgba(0,0,0,0.25)"></div>
<svg class="a" style="left:1121.0px;top:476.6px;overflow:hidden" width="59.0" height="39.4" viewBox="0 0 59.0 39.4" preserveAspectRatio="none"><filter id="f12" x="-20%" y="-20%" width="140%" height="140%"><feGaussianBlur stdDeviation="1.2"/></filter><rect width="100%" height="100%" fill="#3f8f98"/><g filter="url(#f12)"><rect x="-3" y="-3" width="65" height="12" fill="#7ab8c0"/><path d="M36 -3 H62 V12 Q50 9 38 5Z" fill="#e8eeee"/><path d="M-3 10 Q15 6 30 12 Q45 18 62 14 V20 Q45 22 30 18 Q15 14 -3 18Z" fill="#8cc4c8" opacity="0.8"/>
<path d="M-3 28 Q20 24 35 30 T62 28 V42 H-3Z" fill="#1f5d64"/><path d="M-3 20 Q10 24 20 22" stroke="#2c7078" stroke-width="3" fill="none"/><ellipse cx="36" cy="31" rx="3" ry="1.3" fill="#d8eaea"/></g></svg>
<div class="t" style="left:685.2px;width:140px;text-align:center;top:289.85px;font-size:14px;color:#333;font-weight:400;letter-spacing:-0.25px;-webkit-text-stroke:0.1px #333">photo-533923.jpe</div>
<div class="t" style="left:740.2px;width:30px;text-align:center;top:304.15px;font-size:14px;color:#333;font-weight:400;-webkit-text-stroke:0.1px #333">g</div>
<div class="t" style="left:816.5px;width:140px;text-align:center;top:289.85px;font-size:14px;color:#333;font-weight:400;letter-spacing:-0.25px;-webkit-text-stroke:0.1px #333">photo-776656.jpe</div>
<div class="t" style="left:871.5px;width:30px;text-align:center;top:304.15px;font-size:14px;color:#333;font-weight:400;-webkit-text-stroke:0.1px #333">g</div>
<div class="t" style="left:948.7px;width:140px;text-align:center;top:289.85px;font-size:14px;color:#333;font-weight:400;letter-spacing:-0.25px;-webkit-text-stroke:0.1px #333">photo-813269.jpe</div>
<div class="t" style="left:1003.7px;width:30px;text-align:center;top:304.15px;font-size:14px;color:#333;font-weight:400;-webkit-text-stroke:0.1px #333">g</div>
<div class="t" style="left:1080.7px;width:140px;text-align:center;top:289.85px;font-size:14px;color:#333;font-weight:400;letter-spacing:-0.25px;-webkit-text-stroke:0.1px #333">photo-845242.jpe</div>
<div class="t" style="left:1135.7px;width:30px;text-align:center;top:304.15px;font-size:14px;color:#333;font-weight:400;-webkit-text-stroke:0.1px #333">g</div>
<div class="t" style="left:685.2px;width:140px;text-align:center;top:414.85px;font-size:14px;color:#333;font-weight:400;letter-spacing:-0.25px;-webkit-text-stroke:0.1px #333">photo-982263.jpe</div>
<div class="t" style="left:740.2px;width:30px;text-align:center;top:429.15px;font-size:14px;color:#333;font-weight:400;-webkit-text-stroke:0.1px #333">g</div>
<div class="t" style="left:816.5px;width:140px;text-align:center;top:414.85px;font-size:14px;color:#333;font-weight:400;letter-spacing:-0.25px;-webkit-text-stroke:0.1px #333">photo-1054289.jpe</div>
<div class="t" style="left:871.5px;width:30px;text-align:center;top:429.15px;font-size:14px;color:#333;font-weight:400;-webkit-text-stroke:0.1px #333">g</div>
<div class="t" style="left:948.7px;width:140px;text-align:center;top:414.85px;font-size:14px;color:#333;font-weight:400;letter-spacing:-0.25px;-webkit-text-stroke:0.1px #333">photo-1097930.jpe</div>
<div class="t" style="left:1003.7px;width:30px;text-align:center;top:429.15px;font-size:14px;color:#333;font-weight:400;-webkit-text-stroke:0.1px #333">g</div>
<div class="t" style="left:1080.7px;width:140px;text-align:center;top:414.85px;font-size:14px;color:#333;font-weight:400;letter-spacing:-0.25px;-webkit-text-stroke:0.1px #333">photo-1118873.jpe</div>
<div class="t" style="left:1135.7px;width:30px;text-align:center;top:429.15px;font-size:14px;color:#333;font-weight:400;-webkit-text-stroke:0.1px #333">g</div>
</body></html>
